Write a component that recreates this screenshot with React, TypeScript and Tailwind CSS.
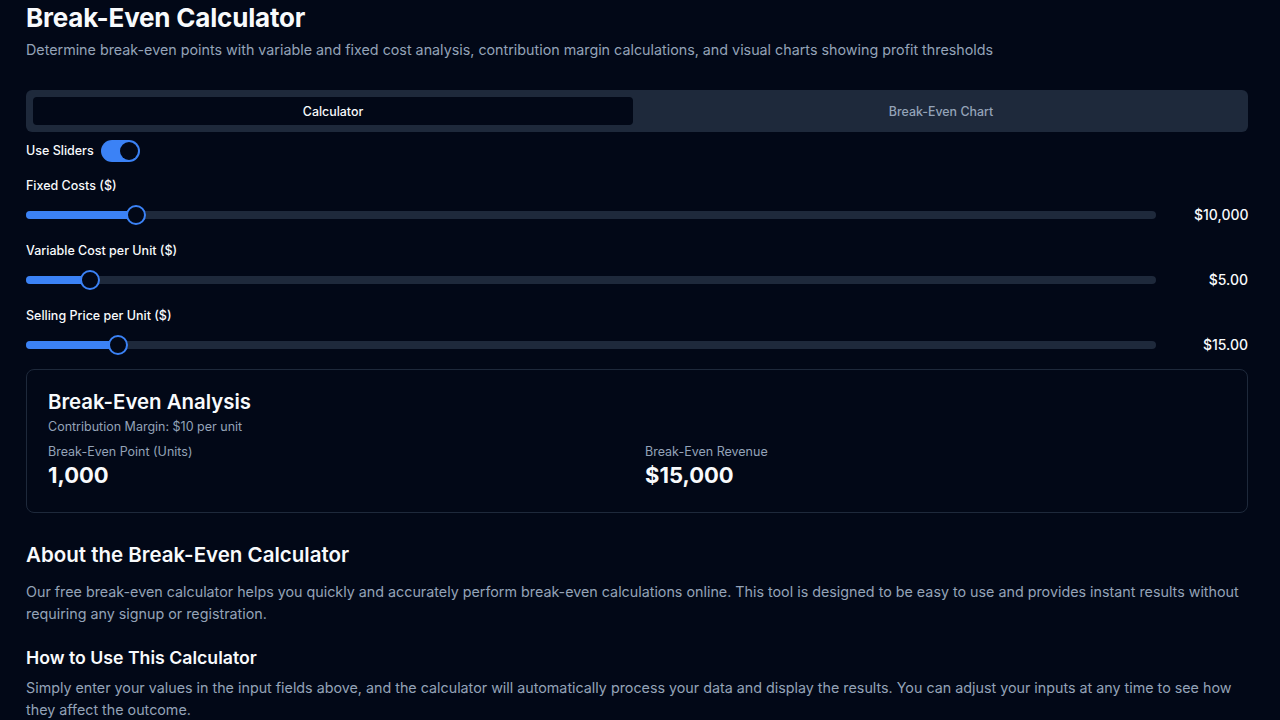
import React, { useState } from 'react';

interface SliderRowProps {
  label: string;
  pct: number;
  display: string;
}

const SliderRow: React.FC<SliderRowProps> = ({ label, pct, display }) => {
  return (
    <div className="flex flex-col">
      <label className="text-[12.5px] font-medium leading-5 text-[#f8fafc]">{label}</label>
      <div className="mt-[9px] flex items-center gap-[38px]">
        <div className="relative h-5 flex-1">
          <div className="absolute left-0 right-0 top-[6px] h-2 rounded-full bg-[#1e293b]">
            <div className="h-2 rounded-full bg-[#3b82f6]" style={{ width: `${pct}%` }} />
          </div>
          <div
            className="absolute top-0 h-5 w-5 -translate-x-1/2 rounded-full border-2 border-[#3b82f6] bg-[#020817]"
            style={{ left: `${pct}%` }}
          />
        </div>
        <span className="w-[54px] text-right text-sm font-medium text-[#f8fafc]">{display}</span>
      </div>
    </div>
  );
};

const App: React.FC = () => {
  const [tab, setTab] = useState('calc');
  const [useSliders, setUseSliders] = useState(true);

  return (
    <div className="min-h-screen bg-[#020817] font-['Inter',sans-serif] text-[#f8fafc]">
      <div className="w-[1222px] pl-[26px] box-content">
        <h1 className="pt-[2px] text-[26px] font-bold leading-8 tracking-[-0.2px]">Break-Even Calculator</h1>
        <p className="mt-[6px] text-[14.3px] leading-5 text-[#94a3b8]">
          Determine break-even points with variable and fixed cost analysis, contribution margin calculations, and visual charts showing profit thresholds
        </p>

        <div className="mt-[30px] grid h-[42px] grid-cols-2 items-center gap-2 rounded-md bg-[#1e293b] px-[7px]">
          <button
            onClick={() => setTab('calc')}
            className={`h-7 rounded-sm pt-[2px] text-[12.4px] font-medium ${tab === 'calc' ? 'bg-[#020817] text-[#f8fafc]' : 'text-[#94a3b8]'}`}
          >
            Calculator
          </button>
          <button
            onClick={() => setTab('chart')}
            className={`h-7 rounded-sm pt-[2px] text-[12.4px] font-medium ${tab === 'chart' ? 'bg-[#020817] text-[#f8fafc]' : 'text-[#94a3b8]'}`}
          >
            Break-Even Chart
          </button>
        </div>

        <div className="mt-[8px] flex items-center gap-[7px]">
          <span className="text-[12.5px] font-medium">Use Sliders</span>
          <button
            onClick={() => setUseSliders(!useSliders)}
            className={`flex h-[22px] w-[39px] items-center rounded-full border-2 border-transparent ${useSliders ? 'bg-[#3b82f6]' : 'bg-[#1e293b]'}`}
          >
            <span
              className={`block h-[18px] w-[18px] rounded-full bg-[#020817] transition-transform ${useSliders ? 'translate-x-[17px]' : 'translate-x-0'}`}
            />
          </button>
        </div>

        <div className="mt-[14px] flex flex-col gap-[16px]">
          <SliderRow label="Fixed Costs ($)" pct={9.7} display="$10,000" />
          <SliderRow label="Variable Cost per Unit ($)" pct={5.7} display="$5.00" />
          <SliderRow label="Selling Price per Unit ($)" pct={8.1} display="$15.00" />
        </div>

        <div className="mt-[14px] rounded-lg border border-[#1e293b] px-[21px] pb-[24px] pt-[18px]">
          <h2 className="text-[20.4px] font-semibold leading-7">Break-Even Analysis</h2>
          <p className="mt-[1px] text-[12.5px] leading-5 text-[#94a3b8]">Contribution Margin: $10 per unit</p>
          <div className="mt-[5px] grid grid-cols-2 gap-4">
            <div>
              <p className="text-[12.5px] leading-5 text-[#94a3b8]">Break-Even Point (Units)</p>
              <p className="text-[22px] font-bold leading-[26px]">1,000</p>
            </div>
            <div>
              <p className="text-[12.5px] leading-5 text-[#94a3b8]">Break-Even Revenue</p>
              <p className="text-[22px] font-bold leading-[26px]">$15,000</p>
            </div>
          </div>
        </div>

        <div className="mt-[28px]">
          <h2 className="text-[20.5px] font-semibold leading-7">About the Break-Even Calculator</h2>
          <p className="mt-[12px] text-[14.3px] leading-[22px] text-[#94a3b8]">
            Our free break-even calculator helps you quickly and accurately perform break-even calculations online. This tool is designed to be easy to use and provides instant results without requiring any signup or registration.
          </p>
          <h3 className="mt-[19px] text-[17.7px] font-semibold leading-7">How to Use This Calculator</h3>
          <p className="mt-[5px] text-[14.3px] leading-[22px] text-[#94a3b8]">
            Simply enter your values in the input fields above, and the calculator will automatically process your data and display the results. You can adjust your inputs at any time to see how they affect the outcome.
          </p>
        </div>
      </div>
    </div>
  );
};

export default App;
